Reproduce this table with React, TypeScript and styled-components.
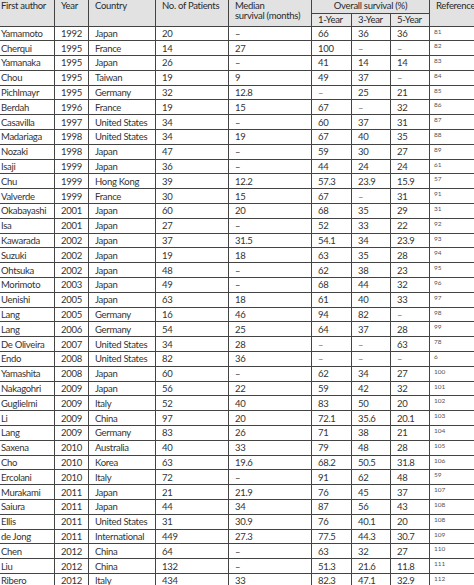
import React from "react";
import styled, { createGlobalStyle } from "styled-components";

const GlobalStyle = createGlobalStyle`
  html, body {
    margin: 0;
    padding: 0;
    background: #ffffff;
    overflow: hidden;
  }
  body {
    font-family: Lato, "Liberation Sans", sans-serif;
    color: #333333;
  }
`;

type Row = [string, string, string, string, string, string, string, string, string];

const D = "–";

const rows: Row[] = [
  ["Yamamoto", "1992", "Japan", "20", D, "66", "36", "36", "81"],
  ["Cherqui", "1995", "France", "14", "27", "100", D, D, "82"],
  ["Yamanaka", "1995", "Japan", "26", D, "41", "14", "14", "83"],
  ["Chou", "1995", "Taiwan", "19", "9", "49", "37", D, "84"],
  ["Pichlmayr", "1995", "Germany", "32", "12.8", D, "25", "21", "85"],
  ["Berdah", "1996", "France", "19", "15", "67", D, "32", "86"],
  ["Casavilla", "1997", "United States", "34", D, "60", "37", "31", "87"],
  ["Madariaga", "1998", "United States", "34", "19", "67", "40", "35", "88"],
  ["Nozaki", "1998", "Japan", "47", D, "59", "30", "27", "89"],
  ["Isaji", "1999", "Japan", "36", D, "44", "24", "24", "61"],
  ["Chu", "1999", "Hong Kong", "39", "12.2", "57.3", "23.9", "15.9", "57"],
  ["Valverde", "1999", "France", "30", "15", "67", D, "31", "91"],
  ["Okabayashi", "2001", "Japan", "60", "20", "68", "35", "29", "31"],
  ["Isa", "2001", "Japan", "27", D, "52", "33", "22", "92"],
  ["Kawarada", "2002", "Japan", "37", "31.5", "54.1", "34", "23.9", "93"],
  ["Suzuki", "2002", "Japan", "19", "18", "63", "35", "28", "94"],
  ["Ohtsuka", "2002", "Japan", "48", D, "62", "38", "23", "95"],
  ["Morimoto", "2003", "Japan", "49", D, "68", "44", "32", "96"],
  ["Uenishi", "2005", "Japan", "63", "18", "61", "40", "33", "97"],
  ["Lang", "2005", "Germany", "16", "46", "94", "82", D, "98"],
  ["Lang", "2006", "Germany", "54", "25", "64", "37", "28", "99"],
  ["De Oliveira", "2007", "United States", "34", "28", D, D, "63", "78"],
  ["Endo", "2008", "United States", "82", "36", D, D, D, "6"],
  ["Yamashita", "2008", "Japan", "60", D, "62", "34", "27", "100"],
  ["Nakagohri", "2009", "Japan", "56", "22", "59", "42", "32", "101"],
  ["Guglielmi", "2009", "Italy", "52", "40", "83", "50", "20", "102"],
  ["Li", "2009", "China", "97", "20", "72.1", "35.6", "20.1", "103"],
  ["Lang", "2009", "Germany", "83", "26", "71", "38", "21", "104"],
  ["Saxena", "2010", "Australia", "40", "33", "79", "48", "28", "105"],
  ["Cho", "2010", "Korea", "63", "19.6", "68.2", "50.5", "31.8", "106"],
  ["Ercolani", "2010", "Italy", "72", D, "91", "62", "48", "59"],
  ["Murakami", "2011", "Japan", "21", "21.9", "76", "45", "37", "107"],
  ["Saiura", "2011", "Japan", "44", "34", "87", "56", "43", "108"],
  ["Ellis", "2011", "United States", "31", "30.9", "76", "40.1", "20", "108"],
  ["de Jong", "2011", "International", "449", "27.3", "77.5", "44.3", "30.7", "109"],
  ["Chen", "2012", "China", "64", D, "63", "32", "27", "110"],
  ["Liu", "2012", "China", "132", D, "51.3", "21.6", "11.8", "111"],
  ["Ribero", "2012", "Italy", "434", "33", "82.3", "47.1", "32.9", "112"],
];

const COLS = "55px 34px 67px 73px 83px 40px 39px 39px 1fr";
const LINE = "#444444";

const Table = styled.div`
  width: 480px;
  font-size: 9.5px;
  letter-spacing: -0.3px;
`;

const Header = styled.div`
  display: grid;
  grid-template-columns: ${COLS};
  grid-template-rows: 14px 11.5px;
  background: #e2e2e2;
  border-bottom: 1px solid ${LINE};
  color: #2a2a2a;
`;

const HeadCell = styled.div<{ $col: string; $row: string; $center?: boolean; $last?: boolean; $first?: boolean }>`
  grid-column: ${(p) => p.$col};
  grid-row: ${(p) => p.$row};
  border-right: ${(p) => (p.$last ? "none" : `1px solid ${LINE}`)};
  padding: 1px ${(p) => (p.$first ? "0 0 1px" : "0 0 6px")};
  text-align: ${(p) => (p.$center ? "center" : "left")};
  line-height: 10px;
  white-space: nowrap;
`;

const GroupCell = styled(HeadCell)`
  border-bottom: 1px solid ${LINE};
  padding: 1px 0 0;
`;

const SubCell = styled(HeadCell)`
  padding-top: 1px;
  background: #e8e8e8;
`;

const BodyRow = styled.div`
  display: grid;
  grid-template-columns: ${COLS};
  height: 14.8px;
  box-sizing: border-box;
  border-bottom: 1px solid ${LINE};
`;

const Cell = styled.div<{ $first?: boolean; $dash?: boolean }>`
  display: flex;
  align-items: center;
  padding-left: ${(p) => (p.$first ? "1px" : "6px")};
  border-right: 1px solid ${LINE};
  white-space: nowrap;
  overflow: hidden;
  color: ${(p) => (p.$dash ? "#777" : "inherit")};
`;

const RefCell = styled.div`
  padding: 1px 0 0 4px;
  font-size: 6.5px;
  line-height: 7px;
  letter-spacing: 0;
  color: #555;
`;

export default function App() {
  return (
    <>
      <GlobalStyle />
      <Table>
        <Header>
          <HeadCell $col="1" $row="1 / 3" $first>First author</HeadCell>
          <HeadCell $col="2" $row="1 / 3">Year</HeadCell>
          <HeadCell $col="3" $row="1 / 3">Country</HeadCell>
          <HeadCell $col="4" $row="1 / 3">No. of Patients</HeadCell>
          <HeadCell $col="5" $row="1 / 3">
            Median
            <br />
            survival (months)
          </HeadCell>
          <GroupCell $col="6 / 9" $row="1" $center>Overall survival (%)</GroupCell>
          <SubCell $col="6" $row="2">1-Year</SubCell>
          <SubCell $col="7" $row="2">3-Year</SubCell>
          <SubCell $col="8" $row="2">5-Year</SubCell>
          <HeadCell $col="9" $row="1 / 3" $last>Reference</HeadCell>
        </Header>
        {rows.map((r, i) => (
          <BodyRow key={i}>
            {r.slice(0, 8).map((v, j) => (
              <Cell key={j} $first={j === 0} $dash={v === D && j > 4}>{v}</Cell>
            ))}
            <RefCell>{r[8]}</RefCell>
          </BodyRow>
        ))}
      </Table>
    </>
  );
}
